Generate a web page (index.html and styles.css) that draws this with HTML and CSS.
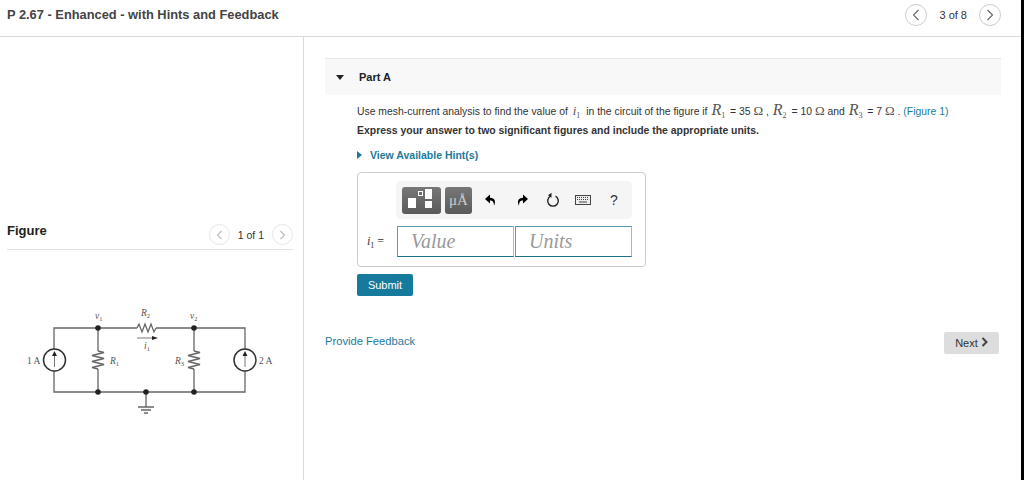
FILE: index.html
```html
<!DOCTYPE html>
<html lang="en">
<head>
<meta charset="utf-8">
<title>P 2.67</title>
<link rel="stylesheet" href="styles.css">
</head>
<body>
<div class="page">
  <header class="top">
    <h1 class="title">P 2.67 - Enhanced - with Hints and Feedback</h1>
    <div class="pager">
      <span class="circle"><svg width="8" height="12" viewBox="0 0 8 12"><path d="M6.5 1 L1.5 6 L6.5 11" class="chev"/></svg></span>
      <span class="count">3 of 8</span>
      <span class="circle"><svg width="8" height="12" viewBox="0 0 8 12"><path d="M1.5 1 L6.5 6 L1.5 11" class="chev"/></svg></span>
    </div>
  </header>
  <div class="main">
    <aside class="side">
      <div class="fig-head">
        <h2 class="fig-title">Figure</h2>
        <div class="fig-pager">
          <span class="circle small"><svg width="7" height="10" viewBox="0 0 7 10"><path d="M5.5 1 L1.5 5 L5.5 9" class="chev faint"/></svg></span>
          <span class="fig-count">1 of 1</span>
          <span class="circle small"><svg width="7" height="10" viewBox="0 0 7 10"><path d="M1.5 1 L5.5 5 L1.5 9" class="chev faint"/></svg></span>
        </div>
      </div>
      <svg class="circuit" width="303" height="125" viewBox="0 300 303 125">
        <g class="wire">
          <path d="M54 349V328H137M156 328H245V349M54 371V392H245V371M245 371"/>
          <path d="M98 328V351M98 369V392M194 328V351M194 369V392M146 392V407"/>
          <path d="M137 328l2-4 3 8 3-8 3 8 3-8 3 8 2-4"/>
          <path d="M98 351l6 1.500-12 3 12 3-12 3 12 3-12 3 6 1.500"/>
          <path d="M194 351l6 1.500-12 3 12 3-12 3 12 3-12 3 6 1.500"/>
          <path d="M138 407H154M141 410H151M144 413H148"/>
          <circle cx="54.500" cy="360" r="11" class="src"/>
          <circle cx="245" cy="360" r="11" class="src"/>
          <path d="M54.500 367V354M245 367V354M137 338H155" class="thin"/>
        </g>
        <path d="M54.500 351l-2.500 5h5zM245 351l-2.500 5h5zM158 338l-6-2v4z" class="dot"/>
        <circle cx="98" cy="328" r="2.800" class="dot"/>
        <circle cx="194" cy="328" r="2.800" class="dot"/>
        <circle cx="98" cy="392" r="2.800" class="dot"/>
        <circle cx="146" cy="392" r="2.800" class="dot"/>
        <circle cx="194" cy="392" r="2.800" class="dot"/>
        <g class="labels">
          <text x="27" y="364">1 A</text>
          <text x="259" y="364">2 A</text>
          <text x="95" y="319" class="it">v<tspan class="sb" dy="1.500">1</tspan></text>
          <text x="190" y="319" class="it">v<tspan class="sb" dy="1.500">2</tspan></text>
          <text x="141" y="316" class="it">R<tspan class="sb" dy="1.500">2</tspan></text>
          <text x="144" y="349" class="it">i<tspan class="sb" dy="1.500">1</tspan></text>
          <text x="110" y="364" class="it">R<tspan class="sb" dy="1.500">1</tspan></text>
          <text x="175" y="364" class="it">R<tspan class="sb" dy="1.500">3</tspan></text>
        </g>
      </svg>
    </aside>
    <main class="content">
      <section class="part">
        <div class="part-head">
          <span class="tri-down"></span>
          <h2 class="part-title">Part A</h2>
        </div>
        <div class="part-body">
          <p class="prompt">Use mesh-current analysis to find the value of <span class="m">i<sub>1</sub></span> in the circuit of the figure if <span class="m big">R<sub>1</sub></span> = 35 <span class="om">Ω</span> , <span class="m big">R<sub>2</sub></span> = 10 <span class="om">Ω</span> and <span class="m big">R<sub>3</sub></span> = 7 <span class="om">Ω</span> . <span class="link">(Figure 1)</span></p>
          <p class="instr">Express your answer to two significant figures and include the appropriate units.</p>
          <p class="hint"><span class="tri-right"></span>View Available Hint(s)</p>
          <div class="answer">
            <div class="toolbar">
              <span class="tbtn wide">
                <svg width="39" height="27" viewBox="0 0 39 27">
                  <rect x="6" y="11" width="8" height="10" fill="#fff"/>
                  <rect x="16.500" y="4.500" width="4" height="4" fill="none" stroke="#fff"/>
                  <rect x="23" y="2" width="7" height="10" fill="#fff"/>
                  <rect x="23" y="14" width="7" height="7" fill="#fff"/>
                </svg>
              </span>
              <span class="tbtn unit">μÅ</span>
              <svg class="ico undo" width="14" height="14" viewBox="0 0 14 14"><path d="M6 1.500 1 6l5 4.500V7.600c2.600 0 3.800 1.300 4 4.900 1.700-2.800 1.900-7.500-4-7.800z"/></svg>
              <svg class="ico redo" width="14" height="14" viewBox="0 0 14 14"><path d="M8 1.500 13 6l-5 4.500V7.600c-2.600 0-3.800 1.300-4 4.900-1.700-2.800-1.900-7.500 4-7.800z"/></svg>
              <svg class="ico reset" width="14" height="16" viewBox="0 0 14 16"><path d="M9.500 4.200a5.300 5.300 0 1 1-5 0" fill="none" stroke="#222" stroke-width="1.400"/><path d="M5.500 0.800v5l-3.500-2.500z" fill="#222"/></svg>
              <svg class="ico keys" width="16" height="10" viewBox="0 0 16 10"><rect x=".5" y=".5" width="15" height="9" fill="#eee" stroke="#444"/><path d="M2 2.500h12M2 4.500h12" stroke="#444" stroke-dasharray="1 1"/><path d="M4 7h8" stroke="#444"/></svg>
              <span class="help">?</span>
            </div>
            <div class="row">
              <span class="var"><i>i</i><sub>1</sub> =</span>
              <span class="field">Value</span>
              <span class="field">Units</span>
            </div>
          </div>
          <button class="submit" type="button">Submit</button>
        </div>
      </section>
      <div class="foot">
        <span class="link feedback">Provide Feedback</span>
        <button class="next" type="button">Next <svg width="7" height="10" viewBox="0 0 7 10"><path d="M1.500 1 L5.500 5 L1.500 9" fill="none" stroke="#444" stroke-width="2"/></svg></button>
      </div>
    </main>
  </div>
</div>
</body>
</html>
```
FILE: styles.css
```css
* { box-sizing: border-box; }
html, body { margin: 0; height: 100%; background: #000; overflow: hidden; }
body { font-family: "Liberation Sans", Arial, sans-serif; color: #333; }
.page { width: 1021px; height: 480px; background: #fff; display: flex; flex-direction: column; }
.top { height: 37px; flex: none; border-bottom: 1px solid #d8dadc; display: flex; align-items: center; justify-content: space-between; padding: 0 20px 0 7px; }
.title { margin: 0 0 8px; font-size: 12.850px; font-weight: bold; color: #444; }
.pager { display: flex; align-items: center; gap: 12px; margin-bottom: 8px; margin-top: 2px; }
.circle { width: 22px; height: 22px; border: 1px solid #ccc; border-radius: 50%; display: flex; align-items: center; justify-content: center; }
.circle.small { width: 21px; height: 21px; border-color: #e6e6e6; }
.chev { fill: none; stroke: #666; stroke-width: 1.100; }
.chev.faint { stroke: #bbb; }
.count { font-size: 11px; color: #333; }
.main { flex: 1; display: flex; min-height: 0; }
.side { width: 304px; flex: none; border-right: 1px solid #d8dadc; padding-top: 186px; }
.fig-head { margin: 0 10px 0 7px; height: 27px; border-bottom: 1px solid #e2e2e2; display: flex; justify-content: space-between; align-items: center; }
.fig-title { margin: 0 0 11px; font-size: 13px; font-weight: bold; color: #222; }
.fig-pager { display: flex; align-items: center; gap: 8px; margin-top: -3px; }
.fig-count { font-size: 10.500px; color: #333; }
.circuit { display: block; margin-top: 50px; }
.wire { fill: none; stroke: #666; stroke-width: 1.300; }
.src { stroke: #333; stroke-width: 1.500; fill: #fff; }
.thin { stroke: #777; stroke-width: 1; }
.dot { fill: #222; }
.labels { font-family: "Liberation Serif", serif; font-size: 9.500px; fill: #555; }
.it { font-style: italic; }
.sb { font-size: 6.500px; font-style: normal; }
.content { flex: 1; min-width: 0; padding: 21px 20px 0 21px; display: flex; flex-direction: column; }
.part-head { height: 37px; background: #f8f8f8; border-top: 1px solid #e6e6e6; display: flex; align-items: center; padding-left: 11px; }
.tri-down { width: 0; height: 0; border-left: 4.500px solid transparent; border-right: 4.500px solid transparent; border-top: 5px solid #222; }
.part-title { margin: 0 0 0 15px; font-size: 11px; font-weight: bold; color: #222; }
.part-body { padding-left: 32px; }
.prompt { margin: 6px 0 0; height: 20px; font-size: 10.400px; line-height: 18px; color: #333; white-space: nowrap; }
.prompt sub { font-size: 8px; font-style: normal; vertical-align: -2.500px; line-height: 0; }
.m { font-family: "Liberation Serif", serif; font-style: italic; font-size: 13px; color: #555; margin: 0 3px 0 2px; }
.m.big { font-size: 16px; margin: 0 2px 0 1px; }
.om { font-family: "Liberation Serif", serif; font-size: 13px; color: #555; }
.link { color: #1d7a9a; }
.instr { margin: 3px 0 0; font-size: 10.450px; line-height: 14px; font-weight: bold; color: #333; }
.hint { margin: 10px 0 0; font-size: 10.500px; line-height: 14px; font-weight: bold; color: #1d7a9a; display: flex; align-items: center; }
.tri-right { width: 0; height: 0; border-top: 4px solid transparent; border-bottom: 4px solid transparent; border-left: 5px solid #1d7a9a; margin-right: 8px; }
.answer { margin-top: 10px; width: 289px; height: 95px; border: 1px solid #ccc; border-radius: 4px; padding: 8px 13px 0 0; }
.toolbar { margin-left: 38px; height: 38px; background: #f5f5f5; border-radius: 5px; display: flex; align-items: center; padding-left: 6px; }
.tbtn { height: 27px; border-radius: 3px; background: linear-gradient(#777, #5a5a5a); display: flex; align-items: center; justify-content: center; }
.tbtn.wide { width: 39px; }
.tbtn.unit { width: 27px; margin-left: 4px; color: #ccc; font-family: "Liberation Serif", serif; font-size: 15px; }
.ico { flex: none; }
.undo { margin-left: 12px; }
.redo { margin-left: 17px; }
.reset { margin-left: 17px; }
.keys { margin-left: 15px; }
.help { margin-left: 19px; font-size: 14px; color: #333; }
.row { margin-top: 7px; display: flex; align-items: center; gap: 1px; }
.var { width: 38px; flex: none; padding-left: 9px; font-family: "Liberation Serif", serif; font-size: 12px; color: #333; white-space: nowrap; }
.var sub { font-size: 8px; line-height: 0; }
.field { width: 117px; flex: none; height: 31px; border: 1px solid #8fc3d6; border-bottom-color: #1d6f8c; border-left-color: #5a9db5; border-top-color: #5a9db5; padding-left: 13px; font-family: "Liberation Serif", serif; font-style: italic; font-size: 20px; line-height: 28px; color: #999; }
.submit { display: block; margin-top: 7px; width: 56px; height: 22px; border: 0; border-radius: 2px; background: #157a9c; color: #fff; font-family: inherit; font-size: 11px; padding: 0; }
.foot { margin-top: 36px; display: flex; align-items: flex-start; justify-content: space-between; }
.feedback { font-size: 11.200px; line-height: 18px; }
.next { width: 55px; height: 22px; margin-right: 2px; border: 0; border-radius: 2px; background: #ddd; color: #333; font-family: inherit; font-size: 11px; padding: 0; }
```
